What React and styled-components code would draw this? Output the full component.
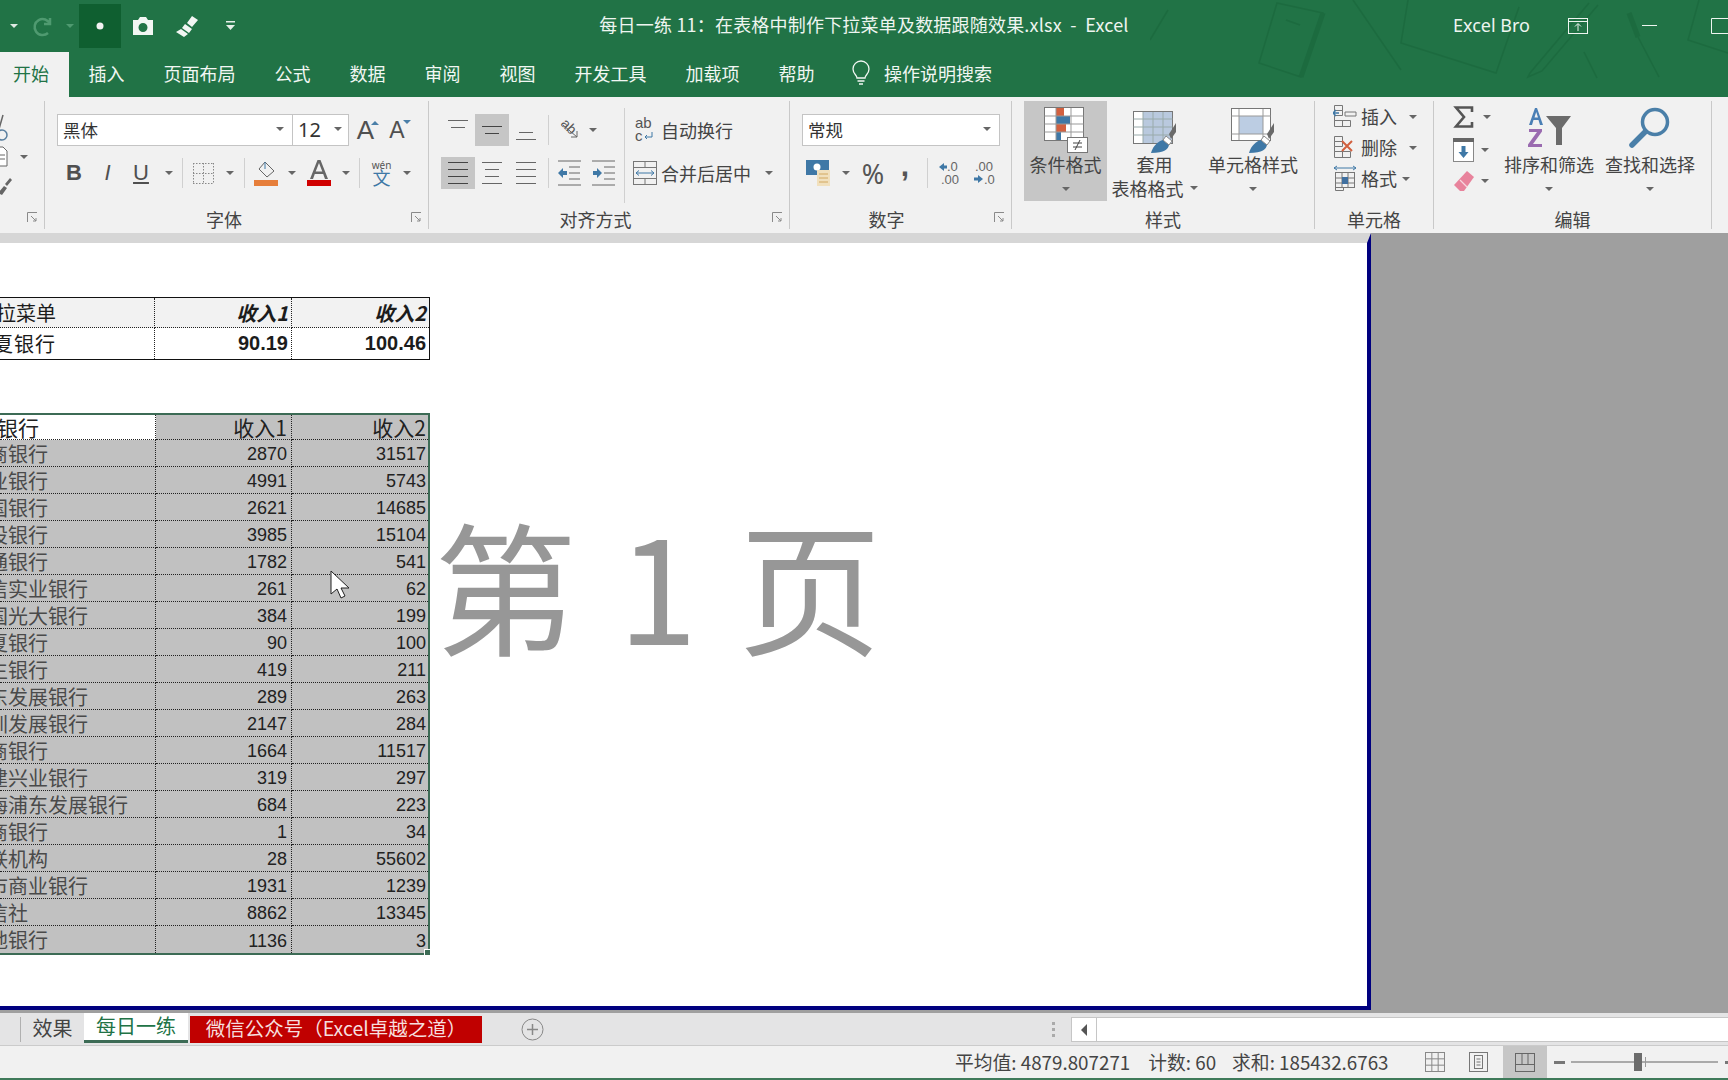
import React from "react";
import styled, { createGlobalStyle } from "styled-components";

const FONT = `"Noto Sans", "Noto Sans CJK SC", sans-serif`;
const CJK = `"Noto Sans CJK SC", "Noto Sans", sans-serif`;
const ARIAL = `"Liberation Sans", "Noto Sans CJK SC", sans-serif`;
const GREEN = "#217346";
const INK = "#444";

const Global = createGlobalStyle`
	html, body { margin: 0; padding: 0; background: #fff; overflow: hidden; }
	* { box-sizing: border-box; }
`;

const Win = styled.div`
	width: 1728px;
	height: 1080px;
	display: flex;
	flex-direction: column;
	overflow: hidden;
	font-family: ${FONT};
	color: ${INK};
`;

/* ---------- header ---------- */
const Header = styled.div`
	position: relative;
	height: 97px;
	background: ${GREEN};
	flex: none;
`;
const Doodle = styled.svg`
	position: absolute;
	right: 0;
	top: 0;
	opacity: 0.6;
`;
const TitleBar = styled.div`
	position: relative;
	height: 52px;
	display: grid;
	grid-template-columns: 1fr auto 1fr;
	align-items: center;
	color: #eef5f0;
`;
const Qat = styled.div`
	display: flex;
	align-items: center;
	height: 100%;
	padding-left: 10px;
`;
const QatBtn = styled.div`
	width: ${(p) => p.$w}px;
	height: 44px;
	display: flex;
	align-items: center;
	justify-content: center;
	background: ${(p) => (p.$on ? "#0f5f30" : "transparent")};
`;
const QatGap = styled.span`
	width: 5px;
`;
const Title = styled.div`
	font-family: ${CJK};
	font-size: 18px;
	letter-spacing: 0.2px;
	white-space: pre;
	padding-bottom: 4px;
`;
const WinRight = styled.div`
	display: flex;
	align-items: center;
	justify-content: flex-end;
`;
const UserName = styled.span`
	font-size: 18px;
	margin-right: 38px;
	padding-bottom: 2px;
`;
const WinBtn = styled.div`
	display: flex;
	align-items: center;
	margin-right: ${(p) => p.$mr || 0}px;
`;
const TabBar = styled.div`
	position: relative;
	display: flex;
	height: 45px;
	font-family: ${CJK};
	font-size: 18px;
	color: #f1f7f3;
`;
const Tab = styled.div`
	display: flex;
	align-items: center;
	padding: ${(p) => (p.$on ? "0 20px 4px 13px" : "0 19.5px 4px")};
	background: ${(p) => (p.$on ? "#f1f1f1" : "transparent")};
	color: ${(p) => (p.$on ? GREEN : "inherit")};
`;
const Tell = styled.div`
	display: flex;
	align-items: center;
	gap: 13px;
	margin-left: 17px;
	padding-bottom: 4px;
`;

/* ---------- ribbon ---------- */
const Ribbon = styled.div`
	display: flex;
	height: 136px;
	flex: none;
	background: #f1f1f1;
	font-family: ${CJK};
	font-size: 18px;
	color: ${INK};
	padding-top: 4px;
`;
const Group = styled.div`
	position: relative;
	flex: none;
	width: ${(p) => p.$w}px;
	height: 128px;
	display: flex;
	flex-direction: column;
	border-right: 1px solid #c9c9c9;
`;
const GroupBody = styled.div`
	flex: 1;
	display: flex;
	min-height: 0;
	padding-left: ${(p) => p.$pl || 0}px;
`;
const GroupLabel = styled.div`
	flex: none;
	height: 20px;
	line-height: 20px;
	text-align: center;
	font-size: 18px;
	padding-right: ${(p) => p.$off || 0}px;
`;
const Launcher = styled.svg`
	position: absolute;
	right: 6px;
	bottom: 6px;
`;
const Stack = styled.div`
	display: flex;
	flex-direction: column;
	padding-top: ${(p) => p.$pt ?? 13}px;
	gap: ${(p) => p.$gap ?? 11}px;
`;
const Row = styled.div`
	display: flex;
	align-items: center;
	height: ${(p) => p.$h || 32}px;
`;
const Cell = styled.div`
	flex: none;
	width: ${(p) => p.$w}px;
	height: 100%;
	display: flex;
	align-items: center;
	justify-content: center;
	background: ${(p) => (p.$on ? "#c6c6c6" : "transparent")};
`;
const Caret = styled.i`
	display: block;
	flex: none;
	width: 0;
	height: 0;
	border-left: 4px solid transparent;
	border-right: 4px solid transparent;
	border-top: 4px solid #666;
`;
const VLine = styled.div`
	flex: none;
	width: ${(p) => p.$w}px;
	height: ${(p) => p.$h || 30}px;
	align-self: center;
	position: relative;
	display: flex;
	justify-content: center;
	&::before {
		content: "";
		width: 1px;
		height: 100%;
		background: #d0d0d0;
	}
`;
const TallLine = styled(VLine)`
	align-self: flex-start;
	margin-top: 7px;
`;
const Select = styled.div`
	flex: none;
	width: ${(p) => p.$w}px;
	height: 32px;
	margin-left: ${(p) => p.$ml || 0}px;
	display: flex;
	align-items: center;
	justify-content: space-between;
	padding: 0 8px 2px 5px;
	background: #fff;
	border: 1px solid #c4c4c4;
	font-size: 17.5px;
	color: #333;
`;
const Bold = styled.span`
	font-family: "Liberation Sans", sans-serif;
	font-weight: ${(p) => p.$weight || 700};
	font-style: ${(p) => (p.$italic ? "italic" : "normal")};
	font-size: ${(p) => p.$size || 22}px;
	text-decoration: ${(p) => (p.$u ? "underline" : "none")};
	text-underline-offset: 2px;
	color: #505050;
`;
const BigBtn = styled.div`
	flex: none;
	width: ${(p) => p.$w}px;
	height: 100px;
	display: flex;
	flex-direction: column;
	align-items: center;
	background: ${(p) => (p.$on ? "#c6c6c6" : "transparent")};
	padding-top: 6px;
`;
const BigIcon = styled.div`
	height: 45px;
	flex: none;
	display: flex;
	align-items: flex-start;
`;
const BigText = styled.div`
	height: 24px;
	line-height: 24px;
	white-space: nowrap;
	display: flex;
	align-items: center;
	gap: 6px;
	flex: none;
`;
const BigCaret = styled.div`
	height: 24px;
	flex: none;
	display: flex;
	align-items: center;
	padding-top: 2px;
`;
const CellStack = styled.div`
	margin-top: -1px;
`;
const CellRow = styled.div`
	display: flex;
	align-items: center;
	height: 31px;
	gap: 4px;
`;
const CellCaret = styled.div`
	margin-left: ${(p) => p.$ml}px;
	padding-top: 2px;
`;

/* ---------- sheet ---------- */
const SheetArea = styled.div`
	flex: 1;
	min-height: 0;
	background: #9f9f9f;
`;
const Page = styled.div`
	position: relative;
	width: 1371px;
	height: 777px;
	overflow: hidden;
	background: #fff;
	border-top: 10px solid #d6d6d6;
	border-right: 4px solid #00007f;
	border-bottom: 4px solid #00007f;
	padding-top: 54px;
`;
const TopTable = styled.div`
	display: grid;
	grid-template-columns: 155px 137px 137px;
	width: 431px;
	margin-left: -1px;
	border: 1px solid #111;
`;
const TopCell = styled.div`
	height: ${(p) => (p.$head ? 30 : 31)}px;
	display: flex;
	align-items: center;
	justify-content: ${(p) => (p.$num ? "flex-end" : "flex-start")};
	padding-right: ${(p) => (p.$num ? 3 : 0)}px;
	overflow: hidden;
	white-space: nowrap;
	background: ${(p) => (p.$head ? "#f2f2f2" : "#fff")};
	border-right: ${(p) => (p.$last ? "none" : "1px dotted #222")};
	border-bottom: ${(p) => (p.$head ? "1px dotted #222" : "none")};
	font-family: ${(p) => (p.$num && !p.$head ? ARIAL : CJK)};
	font-weight: ${(p) => (p.$num ? 700 : 400)};
	font-style: ${(p) => (p.$head && p.$num ? "italic" : "normal")};
	font-size: 20px;
	color: #1c1c1c;
`;
const Clip = styled.span`
	margin-left: ${(p) => p.$x}px;
	letter-spacing: ${(p) => p.$ls || 0}px;
`;
const DataTable = styled.div`
	position: relative;
	display: grid;
	grid-template-columns: 156px 136px 136px;
	width: 431px;
	margin-top: 53px;
	margin-left: -1px;
	border: 2px solid #3c6b55;
	border-left-width: 1px;
`;
const DataCell = styled.div`
	height: ${(p) => (p.$head ? 25 : 27)}px;
	display: flex;
	align-items: center;
	justify-content: ${(p) => (p.$num ? "flex-end" : "flex-start")};
	padding-right: ${(p) => (p.$num ? (p.$last ? 2 : 4) : 0)}px;
	padding-top: ${(p) => (p.$num && !p.$head ? 3 : 0)}px;
	overflow: hidden;
	white-space: nowrap;
	background: ${(p) => (p.$white ? "#fff" : "#c1c1c1")};
	border-right: ${(p) => (p.$last ? "none" : "1px dotted #222")};
	border-bottom: ${(p) => (p.$end ? "none" : "1px dotted #222")};
	font-family: ${(p) => (p.$head || !p.$num ? CJK : ARIAL)};
	font-size: ${(p) => (p.$head ? 21 : p.$num ? 18 : 20)}px;
	color: ${(p) => (p.$num || p.$head ? "#222" : "#4a4a4a")};
`;
const Handle = styled.div`
	position: absolute;
	right: -3px;
	bottom: -3px;
	width: 7px;
	height: 7px;
	background: #3c6b55;
	border: 1px solid #fff;
`;
const Watermark = styled.div`
	position: absolute;
	left: 434px;
	top: 256px;
	font-family: ${CJK};
	font-size: 143px;
	line-height: 168px;
	white-space: pre;
	word-spacing: 9px;
	color: #979797;
`;
const Cursor = styled.svg`
	position: absolute;
	left: 330px;
	top: 327px;
`;

/* ---------- bottom ---------- */
const SheetTabs = styled.div`
	flex: none;
	height: 33px;
	display: flex;
	background: #e4e4e5;
	border-bottom: 1px solid #cbcbcb;
	font-family: ${CJK};
	font-size: 20px;
`;
const TabSep = styled.div`
	flex: none;
	width: 1px;
	height: 25px;
	margin: 4px 10px 0 20px;
	background: #b0b0b0;
`;
const SheetTab = styled.div`
	flex: none;
	height: ${(p) => (p.$red ? 27 : 30)}px;
	margin-top: ${(p) => (p.$red ? 3 : 0)}px;
	margin-left: ${(p) => p.$ml || 0}px;
	width: ${(p) => p.$w}px;
	display: flex;
	align-items: center;
	justify-content: center;
	white-space: nowrap;
	padding-bottom: ${(p) => (p.$red ? 4 : 2)}px;
	font-size: ${(p) => (p.$red ? 19.5 : 20)}px;
	color: ${(p) => (p.$red ? "#f6dede" : p.$on ? GREEN : INK)};
	background: ${(p) => (p.$red ? "#c00000" : p.$on ? "#fff" : "transparent")};
	border-bottom: ${(p) => (p.$on ? "3px solid #3c6b55" : "none")};
`;
const AddSheet = styled.svg`
	margin: 5px 0 0 39px;
	flex: none;
`;
const Dots = styled.svg`
	margin: 9px 0 0 508px;
	flex: none;
`;
const HScroll = styled.div`
	flex: none;
	margin: 4px 0 0 15px;
	width: 660px;
	height: 25px;
	background: #fff;
	border: 1px solid #c6c6c6;
	border-right: none;
	display: flex;
`;
const ScrollBtn = styled.div`
	width: 25px;
	display: flex;
	align-items: center;
	justify-content: center;
	border-right: 1px solid #c6c6c6;
`;
const Status = styled.div`
	flex: none;
	height: 32px;
	display: flex;
	align-items: center;
	background: #f1f1f1;
	padding-left: 955px;
	font-family: ${CJK};
	font-size: 18.8px;
	color: ${INK};
	white-space: nowrap;
`;
const Stat = styled.span`
	margin-right: ${(p) => p.$mr}px;
	padding-bottom: 2px;
`;
const ViewGroup = styled.div`
	display: flex;
	align-items: center;
	flex: none;
	width: 311px;
	margin-left: auto;
`;
const ViewBtn = styled.div`
	flex: none;
	width: ${(p) => p.$w}px;
	height: 32px;
	display: flex;
	align-items: center;
	justify-content: center;
	background: ${(p) => (p.$on ? "#c6c6c6" : "transparent")};
`;
const ZoomMinus = styled.div`
	flex: none;
	width: 11px;
	height: 3px;
	margin: 0 6px 0 7px;
	background: #777;
`;
const ZoomTrack = styled.div`
	position: relative;
	flex: none;
	width: 147px;
	height: 2px;
	background: #aaa;
`;
const ZoomThumb = styled.div`
	position: absolute;
	left: 63px;
	top: -8px;
	width: 8px;
	height: 18px;
	background: #6c6c6c;
`;
const ZoomTick = styled.div`
	position: absolute;
	left: 74px;
	top: -4px;
	width: 1px;
	height: 10px;
	background: #999;
`;
const ZoomPlus = styled(ZoomMinus)`
	margin: 0 0 0 7px;
`;
const EndLine = styled.div`
	flex: none;
	height: 2px;
	background: #3f7a5a;
`;

/* ---------- icons ---------- */
const LauncherIcon = () => (
	<Launcher width="11" height="11" viewBox="0 0 11 11" fill="none" stroke="#8a8a8a">
		<path d="M.5 10V.5H10M4 4l5 5M9 6v3H6" />
	</Launcher>
);
const Lines = ({ rows, w = 20, active }) => (
	<svg width={w} height={rows.length * 7} viewBox={`0 0 ${w} ${rows.length * 7}`} stroke={active ? "#444" : "#666"}>
		{rows.map(([x1, x2], i) => (
			<line key={i} x1={x1} x2={x2} y1={i * 7 + 3.5} y2={i * 7 + 3.5} />
		))}
	</svg>
);
const Indent = ({ flip }) => (
	<svg width="23" height="26" viewBox="0 0 23 26" fill="none">
		<path d={flip ? "M0 1h23M12 7h11M12 13h11M12 19h11M0 25h23" : "M0 1h23M11 7h11M11 13h11M11 19h11M0 25h23"} stroke="#666" />
		<path d={flip ? "M1 11h4V8l5 5-5 5v-3H1z" : "M9 11H5V8l-5 5 5 5v-3h4z"} fill="#3f78a6" />
	</svg>
);
const Grid = ({ cols = 2, rows = 2, w = 21, h = 21, color = "#777", dash }) => {
	const xs = Array.from({ length: cols + 1 }, (_, i) => (i * (w - 1)) / cols + 0.5);
	const ys = Array.from({ length: rows + 1 }, (_, i) => (i * (h - 1)) / rows + 0.5);
	return (
		<svg width={w} height={h} viewBox={`0 0 ${w} ${h}`} stroke={color} strokeDasharray={dash}>
			{xs.map((x) => <line key={x} x1={x} x2={x} y1="0" y2={h} />)}
			{ys.map((y) => <line key={y} y1={y} y2={y} x1="0" x2={w} />)}
		</svg>
	);
};

const CondIcon = () => (
	<svg width="44" height="46" viewBox="0 0 44 46">
		<rect x=".5" y=".5" width="39" height="33" fill="#fff" stroke="#777" />
		<rect x="12" y="1" width="8" height="8" fill="#d2603f" />
		<rect x="12" y="9" width="14" height="8" fill="#3f78a6" />
		<rect x="12" y="17" width="10" height="8" fill="#d2603f" />
		<rect x="12" y="25" width="5" height="8" fill="#3f78a6" />
		<path d="M.5 9h39M.5 17h39M.5 25h39M12 1v32M27 1v32" stroke="#999" fill="none" />
		<rect x="23.5" y="30.5" width="20" height="15" fill="#fff" stroke="#777" />
		<path d="M29 36h9M29 40h9M31 43l5-10" stroke="#444" fill="none" />
	</svg>
);
const Brush = () => (
	<>
		<path d="M18 46c2-8 8-12 12-13l6 5c-1 4-4 8-18 8z" fill="#3f78a6" />
		<path d="M30 33l3-4 6 5-3 4z" fill="#fff" stroke="#888" />
		<path d="M36 27l7-11v9l-5 7z" fill="#6a6a6a" />
	</>
);
const TableIcon = () => (
	<svg width="44" height="46" viewBox="0 0 44 46">
		<rect x=".5" y="4.5" width="39" height="32" fill="#fff" stroke="#777" />
		<rect x="10" y="5" width="29" height="31" fill="#b9c9de" />
		<path d="M.5 12h39M.5 20h39M.5 28h39M10 5v31M20 5v31M30 5v31" stroke="#9aa" fill="none" />
		<Brush />
	</svg>
);
const StyleIcon = () => (
	<svg width="44" height="46" viewBox="0 0 44 46">
		<rect x=".5" y="1.5" width="39" height="32" fill="#fff" stroke="#777" />
		<rect x="8" y="9" width="24" height="18" fill="#bccde3" />
		<path d="M.5 9h39M.5 27h39M8 2v31M32 2v31" stroke="#999" fill="none" />
		<Brush />
	</svg>
);
const InsertIcon = ({ mark }) => (
	<svg width="24" height="24" viewBox="0 0 24 24" fill="none" stroke="#777">
		<path d="M1.5 1.5h8v5h-8zM1.5 6.5h8v5h-8zM1.5 16.5h16v6h-16zM9.5 16.5v6M1.5 11.5v5h8" />
		{mark === "add" && <path d="M12 8h11v4H12z" />}
		{mark === "add" && <path d="M0 9h6M3 6L0 9l3 3" stroke="#3f78a6" strokeWidth="1.5" />}
		{mark === "del" && <path d="M9 6l10 10M19 6L9 16" stroke="#d2603f" strokeWidth="2" />}
	</svg>
);
const FormatIcon = () => (
	<svg width="24" height="26" viewBox="0 0 24 26" fill="none" stroke="#777">
		<path d="M1 3h22M4 1L1 3l3 2M20 1l3 2-3 2" stroke="#3f78a6" />
		<rect x="2.5" y="7.5" width="19" height="15" />
		<path d="M9 8v14M15 8v14M3 13h18M3 18h18M2.5 22.5v3h8v-3" />
		<rect x="9" y="12" width="6" height="7" fill="#3f6f9f" stroke="none" />
	</svg>
);
const SumIcon = () => (
	<svg width="21" height="22" viewBox="0 0 21 22" fill="none" stroke="#555" strokeWidth="2.6">
		<path d="M19 6V1.500H3l8 9.500-8 9.500h16V16" />
	</svg>
);
const FillDown = () => (
	<svg width="21" height="24" viewBox="0 0 21 24">
		<rect x=".5" y=".5" width="20" height="23" fill="#fff" stroke="#888" />
		<rect y="0" width="21" height="4" fill="#666" />
		<path d="M8.5 8h4v6h3l-5 6-5-6h3z" fill="#3f78a6" />
	</svg>
);
const Eraser = () => (
	<svg width="22" height="22" viewBox="0 0 22 22">
		<path d="M14 1l7 6-10 14H7L1 15z" fill="#e8839c" />
		<path d="M7 10l7 7" stroke="#f7d6de" strokeWidth="1.2" />
	</svg>
);
const SortIcon = () => (
	<svg width="44" height="42" viewBox="0 0 44 42">
		<path d="M2 18L8 1h2l6 17h-3l-1.5-5h-5L5 18zM7.500 10.500h3.500L9.200 5z" fill="#4a7fb5" fillRule="evenodd" />
		<path d="M2 22h13v2.500L6 37h9v3H1v-2.500L10 25H2z" fill="#9a6bb0" />
		<path d="M19 9h25l-9 12v17h-6V21z" fill="#6b6b6b" />
	</svg>
);
const FindIcon = () => (
	<svg width="42" height="42" viewBox="0 0 42 42" fill="none">
		<circle cx="26" cy="15" r="12.500" stroke="#4a7fa8" strokeWidth="3.500" />
		<path d="M16 25L3 38" stroke="#4a7fa8" strokeWidth="5.500" strokeLinecap="round" />
	</svg>
);

const headerRow = [
	["下拉菜单", "收入1", "收入2"],
	["华夏银行", "90.19", "100.46"],
];
const rows = [
	["工商银行", 2870, 31517],
	["农业银行", 4991, 5743],
	["中国银行", 2621, 14685],
	["建设银行", 3985, 15104],
	["交通银行", 1782, 541],
	["中信实业银行", 261, 62],
	["中国光大银行", 384, 199],
	["华夏银行", 90, 100],
	["民生银行", 419, 211],
	["广东发展银行", 289, 263],
	["深圳发展银行", 2147, 284],
	["招商银行", 1664, 11517],
	["福建兴业银行", 319, 297],
	["上海浦东发展银行", 684, 223],
	["外商银行", 1, 34],
	["农联机构", 28, 55602],
	["城市商业银行", 1931, 1239],
	["农信社", 8862, 13345],
	["外地银行", 1136, 3],
];
const tabs = ["插入", "页面布局", "公式", "数据", "审阅", "视图", "开发工具", "加载项", "帮助"];

const App = () => (
	<Win>
		<Global />
		<Header>
			<Doodle width="578" height="97" viewBox="1150 0 578 97" fill="none" stroke="#1a663c" strokeWidth="1.5">
				<path d="M1168 10l-18 30M1277 3l46 10-22 64-42-14zM1353 0l48 70M1408 0l-7 43 95 30 23-66M1589 3l-59 70-2 4 14-6 56-66M1699 0l-11 40 40 13" />
				<path d="M1323 13l-22 64M1629 13l9 24" strokeWidth="5" />
				<path d="M1638 37l21 40M1286 20l14 5M1584 52l13 26" />
			</Doodle>
			<TitleBar>
				<Qat>
					<Caret style={{ borderTopColor: "#dfeae3" }} />
					<QatBtn $w={48}>
						<svg width="22" height="22" viewBox="0 0 22 22" fill="none" stroke="#4f9a70" strokeWidth="2.500">
							<path d="M19 9a8 8 0 1 0-2 9" />
							<path d="M19 3v6h-6" />
						</svg>
					</QatBtn>
					<Caret style={{ borderTopColor: "#4f9a70" }} />
					<QatGap />
					<QatBtn $w={42} $on>
						<svg width="8" height="8"><circle cx="4" cy="4" r="3.500" fill="#f2f2f2" /></svg>
					</QatBtn>
					<QatBtn $w={44}>
						<svg width="22" height="18" viewBox="0 0 22 18">
							<path fillRule="evenodd" d="M1 3h5l2-3h6l2 3h5v15H1zM11 6a4.500 4.500 0 1 0 0 9 4.500 4.500 0 0 0 0-9z" fill="#f2f6f3" />
						</svg>
					</QatBtn>
					<QatBtn $w={44}>
						<svg width="24" height="22" viewBox="0 0 24 22">
							<path d="M12 8l5-7 6 4-6 7zM10 9l7 5-3 4-7-5zM6 14l7 5-4 3-8-5z" fill="#f2f6f3" />
						</svg>
					</QatBtn>
					<QatBtn $w={42}>
						<svg width="9" height="10" viewBox="0 0 9 10" fill="#e6efe9">
							<rect width="9" height="1.500" />
							<path d="M0 4h9L4.500 9z" />
						</svg>
					</QatBtn>
				</Qat>
				<Title>每日一练 11：在表格中制作下拉菜单及数据跟随效果.xlsx  -  Excel</Title>
				<WinRight>
					<UserName>Excel Bro</UserName>
					<WinBtn $mr={54}>
						<svg width="20" height="16" viewBox="0 0 20 16" fill="none" stroke="#eef5f0">
							<rect x=".5" y=".5" width="19" height="15" />
							<path d="M1 3.500h18M10 13V6M7 8.500L10 5.500l3 3" />
						</svg>
					</WinBtn>
					<WinBtn $mr={54}>
						<svg width="15" height="2"><rect width="15" height="1" fill="#eef5f0" /></svg>
					</WinBtn>
					<WinBtn>
						<svg width="17" height="16" viewBox="0 0 17 16" fill="none" stroke="#eef5f0">
							<path d="M17 .5H.5v15H17" />
						</svg>
					</WinBtn>
				</WinRight>
			</TitleBar>
			<TabBar>
				<Tab $on>开始</Tab>
				{tabs.map((t) => <Tab key={t}>{t}</Tab>)}
				<Tell>
					<svg width="20" height="26" viewBox="0 0 20 26" fill="none" stroke="#f1f7f3" strokeWidth="1.300">
						<path d="M6 18c0-3-4-4-4-9a8 8 0 0 1 16 0c0 5-4 6-4 9zM6.500 21h7M8 24h4" />
					</svg>
					操作说明搜索
				</Tell>
			</TabBar>
		</Header>

		<Ribbon>
			<Group $w={45}>
				<GroupBody>
					<Stack $pt={10} $gap={6}>
						<svg width="14" height="30" viewBox="0 0 14 30" fill="none" stroke="#5a7f9f" strokeWidth="1.500">
							<path d="M3 4l-4 14" stroke="#666" />
							<circle cx="2" cy="24" r="5" />
						</svg>
						<Row $h={20}>
							<svg width="8" height="22" viewBox="0 0 8 22" fill="#fff" stroke="#666">
								<path d="M-4 1h7l4 4v15H-4zM-2 9h7M-2 13h7" />
							</svg>
							<Caret style={{ marginLeft: 12 }} />
						</Row>
						<svg width="14" height="22" viewBox="0 0 14 22">
							<path d="M-2 20l6-7 3 2-5 7zM5 11l5-6 2 2-5 6z" fill="#666" />
						</svg>
					</Stack>
				</GroupBody>
				<LauncherIcon />
			</Group>

			<Group $w={384}>
				<GroupBody $pl={12}>
					<Stack>
						<Row>
							<Select $w={236}>黑体<Caret /></Select>
							<Select $w={57} $ml={-1} style={{ fontFamily: FONT, fontSize: 20, paddingRight: 6 }}>12<Caret /></Select>
							<Cell $w={38}>
								<Bold $weight={400} $size={26}>A</Bold>
								<Caret style={{ borderTop: 0, borderBottom: "4px solid #4a7fa8", marginBottom: 14, marginLeft: -3 }} />
							</Cell>
							<Cell $w={26}>
								<Bold $weight={400} $size={23}>A</Bold>
								<Caret style={{ borderTopColor: "#4a7fa8", marginBottom: 16, marginLeft: -2 }} />
							</Cell>
						</Row>
						<Row>
							<Cell $w={34}><Bold>B</Bold></Cell>
							<Cell $w={33}><Bold $italic $weight={400}>I</Bold></Cell>
							<Cell $w={34}><Bold $u $weight={400}>U</Bold></Cell>
							<Cell $w={22}><Caret /></Cell>
							<VLine $w={5} />
							<Cell $w={37}><Grid dash="1.500 1.500" color="#888" /></Cell>
							<Cell $w={16}><Caret /></Cell>
							<VLine $w={12} />
							<Cell $w={32}>
								<svg width="24" height="26" viewBox="0 0 24 26" fill="none">
									<path d="M11 2l9 9-7 6-8-8z" stroke="#666" />
									<path d="M11 2v7" stroke="#3f78a6" />
									<rect y="20" width="24" height="6" fill="#e67e3a" />
								</svg>
							</Cell>
							<Cell $w={20}><Caret /></Cell>
							<Cell $w={34}>
								<svg width="24" height="26" viewBox="0 0 24 26">
									<path fill="#666" fillRule="evenodd" d="M10.500 0h3L21 19h-3l-1.800-5H7.800L6 19H3zM8.700 11.500h6.600L12 3z" />
									<rect y="20" width="24" height="6" fill="#d00000" />
								</svg>
							</Cell>
							<Cell $w={20}><Caret /></Cell>
							<VLine $w={6} />
							<Cell $w={39} style={{ flexDirection: "column", lineHeight: 1 }}>
								<span style={{ fontFamily: FONT, fontSize: 10, color: "#555" }}>wén</span>
								<span style={{ fontSize: 18, color: "#3f78a6", marginTop: -2 }}>文</span>
							</Cell>
							<Cell $w={12}><Caret /></Cell>
						</Row>
					</Stack>
				</GroupBody>
				<GroupLabel $off={25}>字体</GroupLabel>
				<LauncherIcon />
			</Group>

			<Group $w={361}>
				<GroupBody $pl={12}>
					<Stack>
						<Row>
							<Cell $w={34} style={{ alignItems: "flex-start", paddingTop: 3 }}><Lines rows={[[0, 20], [3, 17]]} /></Cell>
							<Cell $w={34} $on><Lines active rows={[[0, 20], [3, 17]]} /></Cell>
							<Cell $w={34} style={{ alignItems: "flex-end", paddingBottom: 3 }}><Lines rows={[[3, 17], [0, 20]]} /></Cell>
							<VLine $w={10} />
							<Cell $w={34}>
								<svg width="22" height="24" viewBox="0 0 22 24" fill="none" stroke="#666">
									<text x="-1" y="13" fontFamily="Liberation Sans" fontSize="14" fill="#555" stroke="none" transform="rotate(45 8 12)">ab</text>
									<path d="M4 7l14 12M18 13v6h-6" />
								</svg>
							</Cell>
							<Cell $w={11}><Caret /></Cell>
						</Row>
						<Row>
							<Cell $w={34} $on><Lines active rows={[[0, 20], [0, 20], [0, 20], [0, 20]]} /></Cell>
							<Cell $w={34}><Lines rows={[[0, 20], [3, 17], [3, 17], [0, 20]]} /></Cell>
							<Cell $w={34}><Lines rows={[[0, 20], [0, 20], [0, 20], [0, 20]]} /></Cell>
							<VLine $w={10} />
							<Cell $w={33}><Indent /></Cell>
							<Cell $w={34}><Indent flip /></Cell>
						</Row>
					</Stack>
					<TallLine $w={8} $h={95} />
					<Stack>
						<Row>
							<Cell $w={33}>
								<svg width="20" height="26" viewBox="0 0 20 26" fill="none">
									<text x="0" y="11" fontFamily="Liberation Sans" fontSize="15" fill="#555">ab</text>
									<text x="0" y="24" fontFamily="Liberation Sans" fontSize="15" fill="#555">c</text>
									<path d="M17 15v5h-7M12 18l-2 2 2 2" stroke="#3f78a6" />
								</svg>
							</Cell>
							自动换行
						</Row>
						<Row>
							<Cell $w={33}>
								<svg width="24" height="24" viewBox="0 0 24 24" fill="none" stroke="#777">
									<rect x=".5" y=".5" width="23" height="23" />
									<path d="M.5 6.500h23M.5 17.500h23M12 .5v6M12 17.500v6" />
									<path d="M3 12h18M6 9.500L3 12l3 2.500M18 9.500l3 2.500-3 2.500" stroke="#3f78a6" />
								</svg>
							</Cell>
							合并后居中
							<Caret style={{ marginLeft: 14 }} />
						</Row>
					</Stack>
				</GroupBody>
				<GroupLabel $off={27}>对齐方式</GroupLabel>
				<LauncherIcon />
			</Group>

			<Group $w={222}>
				<GroupBody $pl={12}>
					<Stack>
						<Row><Select $w={198}>常规<Caret /></Select></Row>
						<Row>
							<Cell $w={32}>
								<svg width="24" height="26" viewBox="0 0 24 26">
									<rect x="0" y="0" width="23" height="15" fill="#3f78a6" />
									<circle cx="11" cy="7" r="3.500" fill="#fff" />
									<rect x="11" y="10" width="13" height="16" fill="#f1e0bd" />
									<path d="M13 14h9M13 18h9M13 22h9" stroke="#d2a860" />
								</svg>
							</Cell>
							<Cell $w={24}><Caret /></Cell>
							<Cell $w={30}><span style={{ fontFamily: FONT, fontSize: 27, color: "#555" }}>%</span></Cell>
							<Cell $w={34}><span style={{ fontFamily: ARIAL, fontWeight: 700, fontSize: 30, lineHeight: "30px", paddingBottom: 14, color: "#555" }}>,</span></Cell>
							<VLine $w={10} />
							<Cell $w={36}>
								<svg width="24" height="26" viewBox="0 0 24 26" fontFamily="Liberation Sans" fontSize="13" fill="#666">
									<text x="9" y="11">.0</text>
									<text x="3" y="24">.00</text>
									<path d="M6 3L1 7l5 4V8.500h3v-3H6z" fill="#3f78a6" />
								</svg>
							</Cell>
							<Cell $w={32}>
								<svg width="24" height="26" viewBox="0 0 24 26" fontFamily="Liberation Sans" fontSize="13" fill="#666">
									<text x="3" y="11">.00</text>
									<text x="12" y="24">.0</text>
									<path d="M6 15l5 4-5 4v-2.500H2v-3h4z" fill="#3f78a6" />
								</svg>
							</Cell>
						</Row>
					</Stack>
				</GroupBody>
				<GroupLabel $off={28}>数字</GroupLabel>
				<LauncherIcon />
			</Group>

			<Group $w={303}>
				<GroupBody $pl={12}>
					<BigBtn $w={83} $on>
						<BigIcon><CondIcon /></BigIcon>
						<BigText>条件格式</BigText>
						<BigCaret><Caret /></BigCaret>
					</BigBtn>
					<BigBtn $w={95}>
						<BigIcon><TableIcon /></BigIcon>
						<BigText>套用</BigText>
						<BigText>表格格式<Caret /></BigText>
					</BigBtn>
					<BigBtn $w={102}>
						<BigIcon><StyleIcon /></BigIcon>
						<BigText>单元格样式</BigText>
						<BigCaret><Caret /></BigCaret>
					</BigBtn>
				</GroupBody>
				<GroupLabel>样式</GroupLabel>
			</Group>

			<Group $w={119}>
				<GroupBody $pl={18}>
					<CellStack>
						<CellRow><InsertIcon mark="add" />插入<CellCaret $ml={8}><Caret /></CellCaret></CellRow>
						<CellRow><InsertIcon mark="del" />删除<CellCaret $ml={8}><Caret /></CellCaret></CellRow>
						<CellRow><FormatIcon />格式<CellCaret $ml={1}><Caret /></CellCaret></CellRow>
					</CellStack>
				</GroupBody>
				<GroupLabel>单元格</GroupLabel>
			</Group>

			<Group $w={278}>
				<GroupBody $pl={19}>
					<Stack $pt={2} $gap={6} style={{ width: 46 }}>
						<Row $h={28}>
							<SumIcon />
							<Caret style={{ marginLeft: 9 }} />
						</Row>
						<Row $h={25}><FillDown /><Caret style={{ marginLeft: 7 }} /></Row>
						<Row $h={25}><Eraser /><Caret style={{ marginLeft: 6 }} /></Row>
					</Stack>
					<BigBtn $w={100}>
						<BigIcon><SortIcon /></BigIcon>
						<BigText>排序和筛选</BigText>
						<BigCaret><Caret /></BigCaret>
					</BigBtn>
					<BigBtn $w={102}>
						<BigIcon><FindIcon /></BigIcon>
						<BigText>查找和选择</BigText>
						<BigCaret><Caret /></BigCaret>
					</BigBtn>
				</GroupBody>
				<GroupLabel>编辑</GroupLabel>
			</Group>
		</Ribbon>

		<SheetArea>
			<Page>
				<TopTable>
					<TopCell $head><Clip $x={-24}>{headerRow[0][0]}</Clip></TopCell>
					<TopCell $head $num>{headerRow[0][1]}</TopCell>
					<TopCell $head $num $last>{headerRow[0][2]}</TopCell>
					<TopCell><Clip $x={-28} $ls={1}>{headerRow[1][0]}</Clip></TopCell>
					<TopCell $num>{headerRow[1][1]}</TopCell>
					<TopCell $num $last>{headerRow[1][2]}</TopCell>
				</TopTable>
				<DataTable>
					<DataCell $head $white><Clip $x={-45}>开户银行</Clip></DataCell>
					<DataCell $head $num>收入1</DataCell>
					<DataCell $head $num $last>收入2</DataCell>
					{rows.map(([name, a, b], i) => {
						const end = i === rows.length - 1;
						return (
							<React.Fragment key={i}>
								<DataCell $end={end}><Clip $x={-32}>{name}</Clip></DataCell>
								<DataCell $num $end={end}>{a}</DataCell>
								<DataCell $num $last $end={end}>{b}</DataCell>
							</React.Fragment>
						);
					})}
					<Handle />
				</DataTable>
				<Watermark>第 1 页</Watermark>
				<Cursor width="22" height="30" viewBox="0 0 22 30">
					<path d="M1 1v23l6-5 4 9 4-2-4-8h8z" fill="#fff" stroke="#222" />
				</Cursor>
			</Page>
		</SheetArea>

		<SheetTabs>
			<TabSep />
			<SheetTab $w={43}>效果</SheetTab>
			<SheetTab $w={104} $ml={10} $on>每日一练</SheetTab>
			<SheetTab $w={292} $ml={2} $red>微信公众号（Excel卓越之道）</SheetTab>
			<AddSheet width="23" height="23" viewBox="0 0 23 23" fill="none" stroke="#888">
				<circle cx="11.500" cy="11.500" r="10.500" />
				<path d="M11.500 6v11M6 11.500h11" strokeWidth="1.500" />
			</AddSheet>
			<Dots width="4" height="16" viewBox="0 0 4 16" fill="#aaa">
				<rect width="3" height="3" /><rect y="6" width="3" height="3" /><rect y="12" width="3" height="3" />
			</Dots>
			<HScroll>
				<ScrollBtn>
					<svg width="6" height="12"><path d="M6 0v12L0 6z" fill="#555" /></svg>
				</ScrollBtn>
			</HScroll>
		</SheetTabs>

		<Status>
			<Stat $mr={18}>平均值: 4879.807271</Stat>
			<Stat $mr={16}>计数: 60</Stat>
			<Stat $mr={0}>求和: 185432.6763</Stat>
			<ViewGroup>
				<ViewBtn $w={36}><Grid cols={3} rows={3} w={20} h={20} color="#888" /></ViewBtn>
				<ViewBtn $w={50}>
					<svg width="19" height="20" viewBox="0 0 19 20" fill="none" stroke="#777">
						<rect x=".5" y=".5" width="18" height="19" />
						<rect x="5.500" y="3.500" width="8" height="13" />
						<path d="M7.500 7h4M7.500 10h4M7.500 13h4" />
					</svg>
				</ViewBtn>
				<ViewBtn $w={44} $on>
					<svg width="20" height="19" viewBox="0 0 20 19" fill="none" stroke="#666">
						<rect x=".5" y=".5" width="19" height="18" />
						<path d="M.5 11.500h19M7 .5v11M13 .5v11" />
					</svg>
				</ViewBtn>
				<ZoomMinus />
				<ZoomTrack>
					<ZoomThumb />
					<ZoomTick />
				</ZoomTrack>
				<ZoomPlus />
			</ViewGroup>
		</Status>
		<EndLine />
	</Win>
);

export default App;
